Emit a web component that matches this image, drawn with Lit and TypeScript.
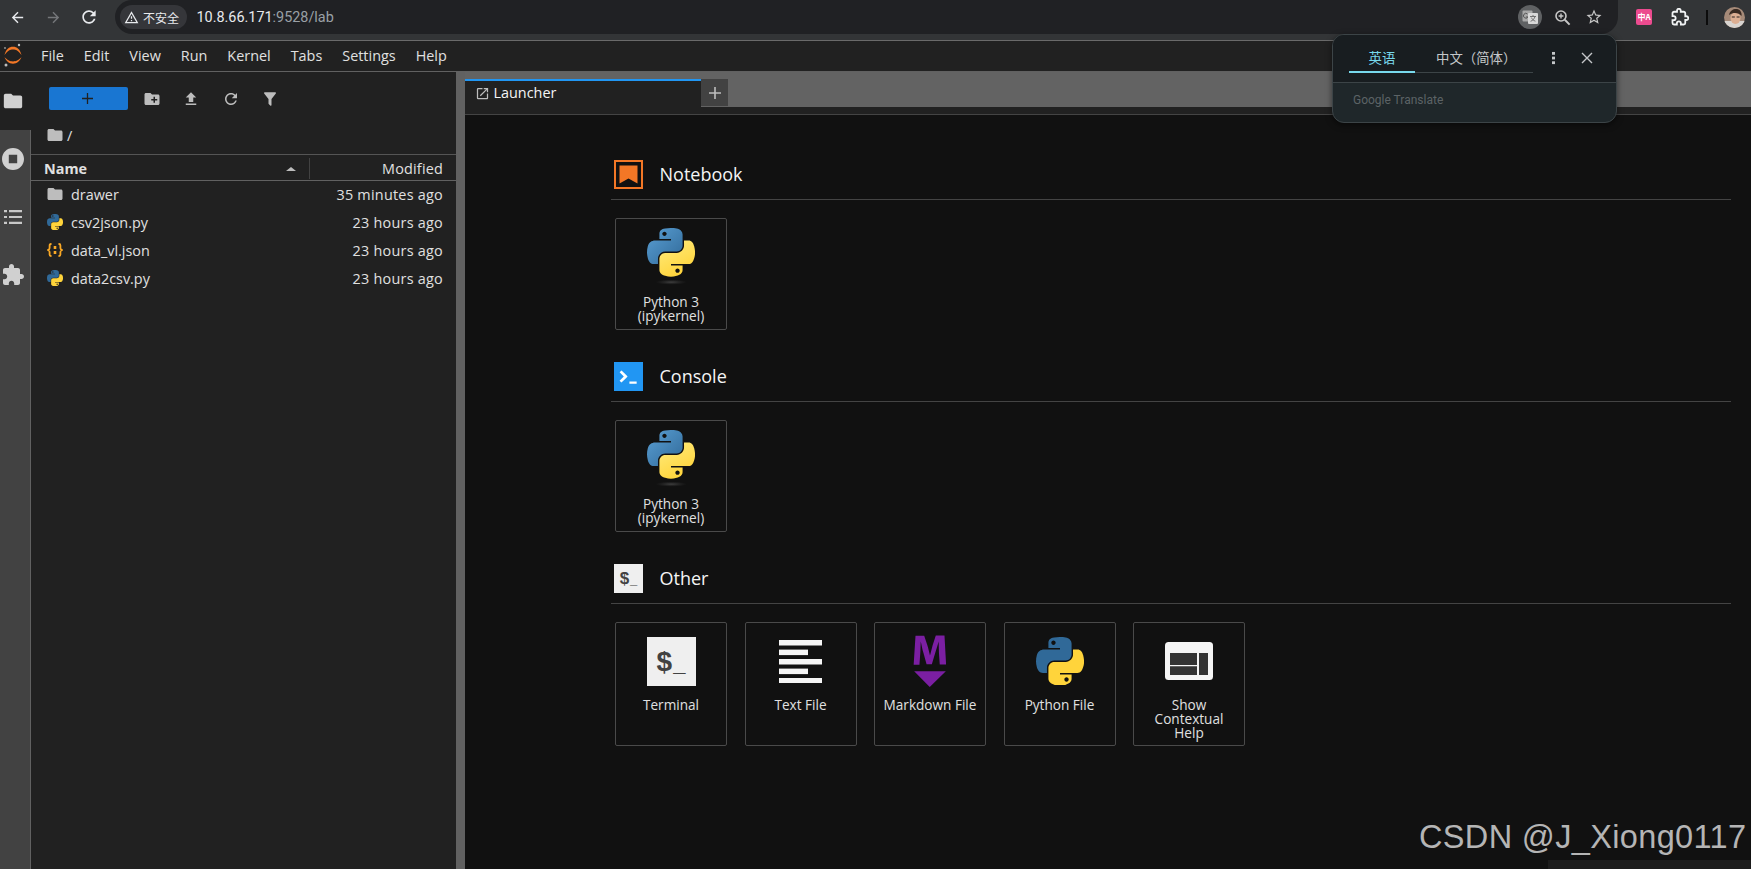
import { LitElement, html, css } from "lit";
import { customElement } from "lit/decorators.js";

const P = {
  back: "M20 11H7.83l5.59-5.59L12 4l-8 8 8 8 1.41-1.41L7.83 13H20v-2z",
  forward: "M4 11h12.17l-5.59-5.59L12 4l8 8-8 8-1.41-1.41L16.17 13H4v-2z",
  refresh: "M17.65 6.35C16.2 4.9 14.21 4 12 4c-4.42 0-7.99 3.58-7.99 8s3.57 8 7.99 8c3.73 0 6.84-2.55 7.73-6h-2.08c-.82 2.33-3.04 4-5.65 4-3.31 0-6-2.69-6-6s2.69-6 6-6c1.66 0 3.14.69 4.22 1.78L13 11h7V4l-2.35 2.35z",
  warn: "M12 5.99L19.53 19H4.47L12 5.99M12 2L1 21h22L12 2zm1 14h-2v2h2v-2zm0-6h-2v4h2v-4z",
  star: "M22 9.24l-7.19-.62L12 2 9.19 8.63 2 9.24l5.46 4.73L5.82 21 12 17.27 18.18 21l-1.63-7.03L22 9.24zM12 15.4l-3.76 2.27 1-4.28-3.32-2.88 4.38-.38L12 6.1l1.71 4.04 4.38.38-3.32 2.88 1 4.28L12 15.4z",
  folder: "M10 4H4c-1.1 0-1.99.9-1.99 2L2 18c0 1.1.9 2 2 2h16c1.1 0 2-.9 2-2V8c0-1.1-.9-2-2-2h-8l-2-2z",
  newFolder: "M20 6h-8l-2-2H4c-1.11 0-1.99.89-1.99 2L2 18c0 1.11.89 2 2 2h16c1.11 0 2-.89 2-2V8c0-1.11-.89-2-2-2zm-1 8h-3v3h-2v-3h-3v-2h3V9h2v3h3v2z",
  upload: "M9 16h6v-6h4l-7-7-7 7h4zm-4 2h14v2H5z",
  filter: "M14,12V19.88C14.04,20.18 13.94,20.5 13.71,20.71C13.32,21.1 12.69,21.1 12.3,20.71L10.29,18.7C10.06,18.47 9.96,18.16 10,17.87V12H9.97L4.21,4.62C3.87,4.19 3.95,3.56 4.38,3.22C4.57,3.08 4.78,3 5,3V3H19V3C19.22,3 19.43,3.08 19.62,3.22C20.05,3.56 20.13,4.19 19.79,4.62L14.03,12H14Z",
  stop: "M12 1C5.9 1 1 5.9 1 12s4.9 11 11 11 11-4.9 11-11S18.1 1 12 1zm4.200 15.200H7.800V7.800h8.400v8.400z",
  list: "M8 5h13v2.200H8zM8 10.900h13v2.200H8zM8 16.800h13v2.200H8zM3 5h3v2.200H3zM3 10.900h3v2.200H3zM3 16.800h3v2.200H3z",
  puzzle: "M20.5 11H19V7c0-1.1-.9-2-2-2h-4V3.500C13 2.120 11.880 1 10.500 1S8 2.120 8 3.500V5H4c-1.100 0-1.990.900-1.990 2v3.800H3.500c1.490 0 2.700 1.210 2.700 2.700s-1.210 2.700-2.700 2.700H2V20c0 1.100.900 2 2 2h3.800v-1.500c0-1.490 1.210-2.700 2.700-2.700 1.490 0 2.700 1.210 2.700 2.700V22H17c1.100 0 2-.900 2-2v-4h1.500c1.380 0 2.500-1.120 2.500-2.500S21.880 11 20.500 11z",
  launch: "M19 19H5V5h7V3H5a2 2 0 0 0-2 2v14a2 2 0 0 0 2 2h14c1.100 0 2-.900 2-2v-7h-2v7zM14 3v2h3.590l-9.830 9.830 1.410 1.410L19 6.410V10h2V3h-7z",
};
const PY_A = "M54.919 0c-4.584.022-8.961.413-12.813 1.095C30.76 3.099 28.7 7.295 28.7 15.032v10.219h26.813v3.406H18.638c-7.793 0-14.616 4.684-16.75 13.594-2.462 10.213-2.571 16.586 0 27.25 1.905 7.938 6.457 13.594 14.25 13.594h9.218v-12.25c0-8.85 7.657-16.656 16.75-16.656h26.782c7.454 0 13.406-6.138 13.406-13.625v-25.531c0-7.266-6.13-12.725-13.406-13.937C64.282.328 59.502-.02 54.918 0zm-14.5 8.22c2.77 0 5.031 2.298 5.031 5.125 0 2.816-2.262 5.093-5.031 5.093-2.78 0-5.031-2.277-5.031-5.093 0-2.827 2.251-5.125 5.03-5.125z";
const PY_B = "M85.638 28.657v11.906c0 9.231-7.826 17-16.75 17H42.106c-7.336 0-13.406 6.279-13.406 13.625V96.72c0 7.266 6.319 11.54 13.406 13.625 8.488 2.495 16.627 2.946 26.782 0 6.75-1.955 13.406-5.888 13.406-13.625V86.5H55.513v-3.405H95.7c7.793 0 10.696-5.436 13.406-13.594 2.8-8.4 2.68-16.476 0-27.25-1.925-7.758-5.604-13.594-13.406-13.594zM70.575 93.313c2.78 0 5.03 2.278 5.03 5.094 0 2.827-2.25 5.125-5.03 5.125-2.77 0-5.03-2.298-5.03-5.125 0-2.816 2.26-5.094 5.03-5.094z";

const ic = (d: string, size: number, fill = "#bdbdbd") =>
  html`<svg class="ic" width=${size} height=${size} viewBox="0 0 24 24"><path d=${d} fill=${fill}></path></svg>`;

const pyFlat = (size: number) =>
  html`<svg class="ic" width=${size} height=${size} viewBox="0 0 111 111"><path fill="#306998" d=${PY_A}></path><path fill="#ffd43b" d=${PY_B}></path></svg>`;

const pyKernel = () => html`<svg class="ic" width="48" height="62" viewBox="0 0 111 143">
  <defs>
    <linearGradient id="ga" x1="0" y1="0" x2="1" y2="1"><stop offset="0" stop-color="#5a9fd4"></stop><stop offset="1" stop-color="#306998"></stop></linearGradient>
    <linearGradient id="gb" x1="0.7" y1="0.9" x2="0.3" y2="0.1"><stop offset="0" stop-color="#ffd43b"></stop><stop offset="1" stop-color="#ffe873"></stop></linearGradient>
    <radialGradient id="gs"><stop offset="0" stop-color="#666" stop-opacity=".55"></stop><stop offset="1" stop-color="#444" stop-opacity="0"></stop></radialGradient>
  </defs>
  <path fill="url(#ga)" d=${PY_A}></path><path fill="url(#gb)" d=${PY_B}></path>
  <ellipse cx="56" cy="125" rx="36" ry="6" fill="url(#gs)"></ellipse>
</svg>`;

const notebookIcon = () => html`<svg class="ic" width="29" height="29" viewBox="0 0 29 29">
  <rect x="1" y="1" width="27" height="27" fill="none" stroke="#f37726" stroke-width="2"></rect>
  <path d="M5.500 5.500h18v18l-9-5-9 5z" fill="#f37726"></path>
</svg>`;

const consoleIcon = () => html`<svg class="ic" width="29" height="29" viewBox="20 20 160 160">
  <path fill="#2196f3" d="M20 19.800h160v160.200H20z"></path>
  <path fill="#fff" d="M105 127.300h40v12.800h-40zM51.100 77L74 99.900l-23.300 23.300 10.500 10.500 23.300-23.300L95 99.900 84.500 89.400 61.600 66.500z"></path>
</svg>`;

const editorIcon = () => html`<svg class="ic" width="44" height="43" viewBox="0 0 44 43" fill="#f5f5f5">
  <rect x="0" y="0" width="43" height="5.500"></rect><rect x="0" y="9.600" width="29" height="5.500"></rect>
  <rect x="0" y="19" width="43" height="5.500"></rect><rect x="0" y="28.600" width="29" height="5.500"></rect><rect x="0" y="38" width="43" height="5"></rect>
</svg>`;

const markdownIcon = () => html`<svg class="ic" width="58" height="58" viewBox="0 0 22 22"><path fill="#7b1fa2" d="M5 14.900h12l-6.100 6zm9.400-6.800c0-1.300-.1-2.900-.1-4.500-.4 1.400-.9 2.900-1.300 4.300l-1.300 4.300h-2L8.500 7.900c-.4-1.300-.7-2.900-1-4.300-.1 1.600-.1 3.200-.2 4.600L7 12.400H4.800l.7-11h3.300L10 5c.4 1.200.7 2.700 1 3.900.3-1.200.7-2.600 1-3.900l1.200-3.700h3.300l.6 11h-2.400l-.3-4.200z"></path></svg>`;

const helpIcon = () => html`<svg class="ic" width="48" height="38" viewBox="0 0 48 38">
  <rect width="48" height="38" rx="3.500" fill="#f5f5f5"></rect>
  <path fill="#333" d="M5 11h27v12H5zM5 24.300h27V33H5zM34 11h9v22h-9z"></path>
</svg>`;

const jsonIcon = () => html`<svg class="ic" width="16" height="16" viewBox="0 0 16 16" fill="none" stroke="#f9a825" stroke-width="1.800">
  <path d="M4.500 2H4C3 2 2.600 2.600 2.600 3.400V6C2.600 7 2 7.600 1 8c1 .4 1.600 1 1.600 2v2.600c0 .8.4 1.400 1.400 1.400h.5"></path>
  <path d="M11.500 2h.5c1 0 1.400.6 1.400 1.400V6c0 1 .6 1.600 1.600 2-1 .4-1.600 1-1.600 2v2.600c0 .8-.4 1.400-1.400 1.400h-.5"></path>
  <path d="M8 4v3M8 9v3" stroke-width="2.600"></path>
</svg>`;

const logo = () => html`<svg class="ic" width="20" height="24" viewBox="0 0 20 24">
  <path fill="#f37726" d="M1.500 12C3 6 6 3.700 10 3.700S17 6 18.500 12C15 7.500 13 6.500 10 6.500S5 7.500 1.500 12z"></path>
  <path fill="#f37726" d="M1.500 14.300C3.500 18.500 6 20.700 10 20.700S16.500 18.500 18.500 14.300C15 17.600 13 18.400 10 18.400S5 17.600 1.500 14.300z"></path>
  <circle cx="16" cy="2" r="1.200" fill="#bdbdbd"></circle><circle cx="3" cy="22" r="1.500" fill="#bdbdbd"></circle><circle cx="2" cy="5" r=".9" fill="#9e9e9e"></circle>
</svg>`;

const zoomGlass = () => html`<svg class="ic" width="17" height="17" viewBox="0 0 17 17" fill="none" stroke="#c7c7c7">
  <circle cx="7" cy="7" r="5" stroke-width="1.600"></circle><path d="M10.800 10.800L15.600 15.600" stroke-width="2"></path><path d="M4.600 7h4.800M7 4.600v4.800" stroke-width="1.400"></path>
</svg>`;

const extOutline = () => html`<svg class="ic" width="18" height="18" viewBox="0 0 24 24"><path d=${P.puzzle} fill="none" stroke="#f1f3f4" stroke-width="2.400"></path></svg>`;

const translateBadge = () => html`<svg class="ic" width="24" height="24" viewBox="0 0 24 24">
  <circle cx="12" cy="12" r="12" fill="#5f6163"></circle>
  <rect x="4.500" y="5.500" width="10" height="11" rx="1" fill="#a8a8a8"></rect>
  <rect x="10" y="8" width="10" height="11" rx="1" fill="#d8d8d8"></rect>
  <path d="M12 11.500h6M15 10v1.500M17 11.500c-.6 2.400-2.400 4-4.400 4.800M13.400 12.600c.7 1.500 2.200 3 4 3.600" fill="none" stroke="#666" stroke-width=".9"></path>
  <path d="M9.500 9a2.400 2.400 0 1 0 .4 3H8" fill="none" stroke="#555" stroke-width="1"></path>
</svg>`;

const avatar = () => html`<svg class="ic" width="21" height="21" viewBox="0 0 21 21">
  <defs><clipPath id="av"><circle cx="10.500" cy="10.500" r="10.500"></circle></clipPath></defs>
  <g clip-path="url(#av)">
    <rect width="21" height="21" fill="#a58a78"></rect>
    <rect y="14" width="21" height="7" fill="#d8d4d0"></rect>
    <ellipse cx="11.500" cy="11" rx="5" ry="6" fill="#dcae92"></ellipse>
    <path d="M5 8c1-5 5-6.500 8-6 3 .4 5 3 4.600 7-2-2.600-5-3.400-8-3-1.600.3-3 1-4.600 2z" fill="#3a2a22"></path>
    <path d="M7.800 10h3M12.600 10h3" stroke="#2a2220" stroke-width="1.200"></path>
  </g>
</svg>`;

interface FileRow { name: string; time: string; kind: "folder" | "py" | "json"; }
const FILES: FileRow[] = [
  { name: "drawer", time: "35 minutes ago", kind: "folder" },
  { name: "csv2json.py", time: "23 hours ago", kind: "py" },
  { name: "data_vl.json", time: "23 hours ago", kind: "json" },
  { name: "data2csv.py", time: "23 hours ago", kind: "py" },
];
const MENUS = ["File", "Edit", "View", "Run", "Kernel", "Tabs", "Settings", "Help"];

@customElement("app-root")
export class AppRoot extends LitElement {
  static styles = css`
    :host {
      display: flex;
      flex-direction: column;
      position: relative;
      width: 100%;
      height: 100vh;
      overflow: hidden;
      background: #111;
      color: #e0e0e0;
      font-family: "Open Sans", "Noto Sans CJK SC", sans-serif;
      font-size: 14px;
    }
    .ic { display: block; flex: none; }

    .chrome {
      height: 40px; flex: none; display: flex; align-items: flex-start;
      background: #333537; border-bottom: 1px solid #6a6a6a;
    }
    .nav { width: 115px; height: 34px; flex: none; display: flex; align-items: center; padding-left: 0; box-sizing: border-box; margin-left: -1px; margin-right: 1px; }
    .nav-btn { width: 36px; display: flex; justify-content: center; }
    .pill {
      width: 1503px; height: 34px; flex: none; box-sizing: border-box;
      display: flex; align-items: center; padding-left: 5px;
      background: #202124; border-radius: 17px 0 17px 17px;
    }
    .chip {
      width: 67px; height: 24px; box-sizing: border-box; flex: none; border-radius: 12px;
      background: #35363a; display: flex; align-items: center; gap: 4px; padding-left: 4px;
      font-size: 12px; color: #e8eaed; font-family: "Noto Sans CJK SC", sans-serif;
    }
    .url { margin-left: 9.500px; font-size: 14.400px; color: #e8eaed; font-family: "Roboto", sans-serif; }
    .url span { color: #9aa0a6; }
    .pill-right { margin-left: auto; display: flex; align-items: center; padding-right: 15px; }
    .pill-right .zoom { margin-left: 11.500px; }
    .pill-right .star { margin-left: 14.500px; }
    .tools { flex: 1; height: 34px; display: flex; align-items: center; }
    .ext {
      width: 16px; height: 16px; margin-left: 18px; background: #ec4b8f; border-radius: 2px;
      color: #fff; font: 700 8px/16px "Noto Sans CJK SC", sans-serif; text-align: center; overflow: hidden;
    }
    .tools .puzzle { margin-left: 19px; }
    .divider { width: 2px; height: 15px; background: #0c0c0c; margin-left: 17px; }
    .tools .avatar { margin-left: 16px; }

    .menubar {
      height: 28px; padding-bottom: 2px; flex: none; display: flex; align-items: center; background: #212121;
      border-bottom: 1px solid #616161; font-size: 14.400px; color: #e0e0e0;
    }
    .logo { width: 41px; flex: none; padding-left: 3px; box-sizing: border-box; }
    .menus { display: flex; gap: 20px; }

    .body { flex: 1; display: flex; min-height: 0; }
    .side { width: 31px; flex: none; background: #424242; box-sizing: border-box; border-right: 1px solid #616161; }
    .vtab { height: 58px; display: flex; align-items: center; justify-content: center; padding-right: 4px; box-sizing: border-box; }
    .vtab.on { background: #212121; margin-right: -1px; padding-right: 5px; position: relative; }

    .panel { width: 425px; flex: none; background: #212121; display: flex; flex-direction: column; font-size: 14.400px; }
    .fb-tools { display: flex; align-items: center; padding: 15px 0 0 18px; height: 23px; }
    .new { width: 79px; height: 23px; box-sizing: border-box; padding-right: 2px; background: #1976d2; border-radius: 2px; display: flex; align-items: center; justify-content: center; margin-right: 4px; }
    .tool { width: 39.500px; display: flex; justify-content: center; }
    .crumb { height: 44px; box-sizing: border-box; padding: 6px 0 0 16px; display: flex; align-items: center; gap: 4px; }
    .head {
      height: 23px; padding-top: 2px; display: flex; align-items: center; border-top: 1px solid #555; border-bottom: 1px solid #616161;
    }
    .h-name { width: 279px; flex: none; box-sizing: border-box; padding: 0 13px 0 13px; display: flex; justify-content: space-between; align-items: center; font-weight: 700; height: 21px; border-right: 1px solid #424242; }
    .caret { width: 0; height: 0; border: 5px solid transparent; border-top: 0; border-bottom: 4.500px solid #bdbdbd; }
    .h-mod { flex: 1; text-align: right; padding-right: 13px; letter-spacing: .2px; }
    .row { height: 28px; box-sizing: border-box; display: flex; align-items: center; padding: 0 13px 2px 16px; }
    .slot { width: 16px; flex: none; display: flex; justify-content: center; }
    .row .nm { margin-left: 8px; flex: 1; }
    .row .tm { letter-spacing: .25px; }

    .split { width: 9px; flex: none; background: #616161; }

    .main { flex: 1; min-width: 0; display: flex; flex-direction: column; }
    .tabbar {
      height: 42px; flex: none; display: flex; align-items: flex-end;
      background: linear-gradient(#636363 35px, #212121 35px);
    }
    .tab {
      width: 236px; height: 35px; box-sizing: border-box; flex: none; background: #212121;
      border-top: 2px solid #2196f3; display: flex; align-items: flex-start; padding: 2px 0 0 9.500px; gap: 4px;
      font-size: 14.400px; color: #f5f5f5;
    }
    .tab .ic { margin-top: 3px; }
    .plus {
      width: 27px; height: 27px; background: #424242; margin-bottom: 8px; display: flex; align-items: center; justify-content: center;
    }
    .launcher { flex: 1; min-height: 0; background: #111; border-top: 1px solid #444; padding: 45px 0 0 146px; box-sizing: border-box; }
    .sec { width: 1120px; margin-bottom: 32px; }
    .sec-head { height: 39px; display: flex; align-items: flex-start; padding-left: 3px; border-bottom: 1px solid #444; }
    .sec-title { margin-left: 16.500px; font-size: 18px; line-height: 29px; color: #f5f5f5; }
    .cards { display: flex; gap: 17.500px; padding: 18px 0 0 4px; }
    .card {
      width: 112px; height: 112px; box-sizing: border-box; border: 1px solid #4a4a4a; border-radius: 2px;
      display: flex; flex-direction: column; align-items: center; background: #111;
      color: #e0e0e0;
    }
    .card.tall { height: 124px; }
    .ico { height: 58px; margin-top: 9px; display: flex; align-items: flex-start; justify-content: center; }
    .tall .ico { align-items: center; }
    .lbl { width: 102px; text-align: center; font-size: 13.600px; line-height: 14px; margin-top: 9px; }
    .tall .lbl { margin-top: 8px; }
    .terminal {
      width: 49px; height: 49px; background: #efefef; color: #424242;
      font: 700 28px/50px "Liberation Sans", sans-serif; text-align: center;
    }
    .terminal .us { font-size: 22px; margin-left: 1px; }
    .terminal.small { width: 29px; height: 29px; font-size: 17px; line-height: 29px; }
    .terminal.small .us { font-size: 13px; }

    .popup {
      position: absolute; left: 1332px; top: 34px; width: 285px; height: 89px; box-sizing: border-box;
      border: 1px solid #3c4447; border-radius: 12px; background: #1f272a; overflow: hidden;
      box-shadow: 0 2px 6px rgba(0,0,0,.5); font-family: "Noto Sans CJK SC", sans-serif;
    }
    .pop-top { height: 48px; background: #181d20; border-bottom: 1px solid #3c4447; box-sizing: border-box; display: flex; align-items: flex-start; padding-left: 16px; }
    .langs { width: 184px; height: 38px; display: flex; border-bottom: 1px solid #3c4447; font-size: 13.400px; margin-top: -1px; }
    .lang { line-height: 46px; color: #c4c7c9; white-space: nowrap; }
    .lang.on { width: 66px; text-align: center; color: #78d9ec; border-bottom: 2px solid #78d9ec; height: 37px; margin-right: 21px; }
    .pop-ctl { display: flex; align-items: center; height: 46px; margin-left: 18.500px; }
    .dots { width: 3px; height: 14px; background: radial-gradient(circle, #c4c7c9 1.400px, transparent 1.600px) 0 0 / 3px 4.700px; }
    .x { margin-left: 26.500px; }
    .pop-foot { padding: 10px 0 0 20px; font: 12px "Roboto", sans-serif; color: #5c6366; }

    .mark {
      position: absolute; left: 1419px; top: 819px; font: 32.500px/36px "Liberation Sans", sans-serif; color: #b5b5b5; white-space: nowrap; letter-spacing: .35px;
    }
    .corner { position: absolute; left: 1548px; top: 860px; width: 203px; height: 9px; background: #1c1c1c; }
  `;

  private section(title: string, icon: unknown, cards: unknown) {
    return html`<div class="sec">
      <div class="sec-head">${icon}<div class="sec-title">${title}</div></div>
      <div class="cards">${cards}</div>
    </div>`;
  }

  private kernelCard() {
    return html`<div class="card"><div class="ico">${pyKernel()}</div><div class="lbl">Python 3<br />(ipykernel)</div></div>`;
  }

  private tall(icon: unknown, label: unknown) {
    return html`<div class="card tall"><div class="ico">${icon}</div><div class="lbl">${label}</div></div>`;
  }

  render() {
    return html`
      <div class="chrome">
        <div class="nav">
          <div class="nav-btn">${ic(P.back, 17, "#e8eaed")}</div>
          <div class="nav-btn">${ic(P.forward, 17, "#75777a")}</div>
          <div class="nav-btn">${ic(P.refresh, 20, "#e8eaed")}</div>
        </div>
        <div class="pill">
          <div class="chip">${ic(P.warn, 15, "#e8eaed")}<span>不安全</span></div>
          <div class="url">10.8.66.171<span>:9528/lab</span></div>
          <div class="pill-right">
            ${translateBadge()}
            <div class="zoom">${zoomGlass()}</div>
            <div class="star">${ic(P.star, 18, "#c7c7c7")}</div>
          </div>
        </div>
        <div class="tools">
          <div class="ext">中A</div>
          <div class="puzzle">${extOutline()}</div>
          <div class="divider"></div>
          <div class="avatar">${avatar()}</div>
        </div>
      </div>

      <div class="menubar">
        <div class="logo">${logo()}</div>
        <div class="menus">${MENUS.map((m) => html`<span>${m}</span>`)}</div>
      </div>

      <div class="body">
        <div class="side">
          <div class="vtab on">${ic(P.folder, 22, "#d0d0d0")}</div>
          <div class="vtab">${ic(P.stop, 24, "#d0d0d0")}</div>
          <div class="vtab">${ic(P.list, 24, "#c8c8c8")}</div>
          <div class="vtab">${ic(P.puzzle, 24, "#d0d0d0")}</div>
        </div>
        <div class="panel">
          <div class="fb-tools">
            <div class="new"><svg class="ic" width="11" height="11" viewBox="0 0 12 12"><path d="M5.300 0h1.400v5.300H12v1.400H6.700V12H5.300V6.700H0V5.300h5.300z" fill="#212121"></path></svg></div>
            <div class="tool">${ic(P.newFolder, 18)}</div>
            <div class="tool">${ic(P.upload, 18)}</div>
            <div class="tool">${ic(P.refresh, 18)}</div>
            <div class="tool">${ic(P.filter, 18)}</div>
          </div>
          <div class="crumb"><div class="slot">${ic(P.folder, 18, "#bdbdbd")}</div><span>/</span></div>
          <div class="head">
            <div class="h-name"><span>Name</span><span class="caret"></span></div>
            <div class="h-mod">Modified</div>
          </div>
          ${FILES.map((f) => html`<div class="row">
            <div class="slot">${f.kind === "folder" ? ic(P.folder, 18, "#bdbdbd") : f.kind === "py" ? pyFlat(16) : jsonIcon()}</div>
            <div class="nm">${f.name}</div><div class="tm">${f.time}</div>
          </div>`)}
        </div>
        <div class="split"></div>
        <div class="main">
          <div class="tabbar">
            <div class="tab">${ic(P.launch, 15, "#bdbdbd")}<span>Launcher</span></div>
            <div class="plus"><svg class="ic" width="12" height="12" viewBox="0 0 12 12"><path d="M5.200 0h1.600v5.200H12v1.600H6.800V12H5.200V6.800H0V5.200h5.200z" fill="#bdbdbd"></path></svg></div>
          </div>
          <div class="launcher">
            ${this.section("Notebook", notebookIcon(), this.kernelCard())}
            ${this.section("Console", consoleIcon(), this.kernelCard())}
            ${this.section("Other", html`<div class="terminal small">$<span class="us">_</span></div>`, html`
              ${this.tall(html`<div class="terminal">$<span class="us">_</span></div>`, "Terminal")}
              ${this.tall(editorIcon(), "Text File")}
              ${this.tall(markdownIcon(), "Markdown File")}
              ${this.tall(pyFlat(48), "Python File")}
              ${this.tall(helpIcon(), html`Show<br />Contextual<br />Help`)}
            `)}
          </div>
        </div>
      </div>

      <div class="popup">
        <div class="pop-top">
          <div class="langs"><div class="lang on">英语</div><div class="lang">中文（简体）</div></div>
          <div class="pop-ctl">
            <div class="dots"></div>
            <svg class="ic x" width="12" height="12" viewBox="0 0 12 12"><path d="M1 1l10 10M11 1L1 11" stroke="#c4c7c9" stroke-width="1.400"></path></svg>
          </div>
        </div>
        <div class="pop-foot">Google Translate</div>
      </div>
      <div class="corner"></div>
      <div class="mark">CSDN @J_Xiong0117</div>
    `;
  }
}
